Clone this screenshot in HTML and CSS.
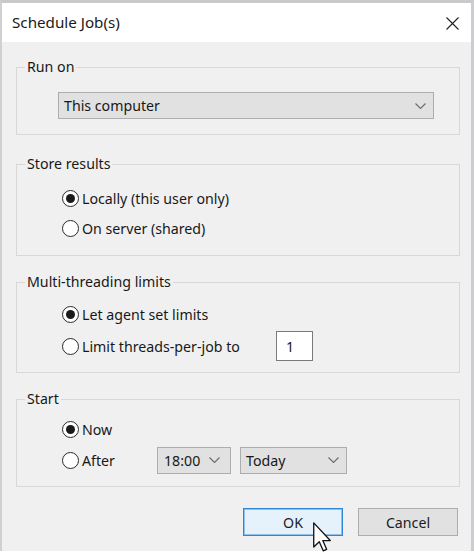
FILE: index.html
```html
<!DOCTYPE html>
<html lang="en">
<head>
<meta charset="utf-8">
<title>Schedule Job(s)</title>
<link rel="stylesheet" href="styles.css">
</head>
<body>
<div class="window">
  <div class="titlebar">
    <span class="title">Schedule Job(s)</span>
    <svg class="close" width="13" height="13" viewBox="0 0 13 13"><path d="M0.5 0.5 L12.5 12.5 M12.5 0.5 L0.5 12.5" stroke="#1f1f1f" stroke-width="1.1" fill="none"/></svg>
  </div>
  <div class="content">
    <fieldset class="group g-runon">
      <legend>Run on</legend>
      <div class="combo combo-wide">
        <span>This computer</span>
        <svg width="11" height="6" viewBox="0 0 11 6"><path d="M0.5 0.5 L5.5 5.5 L10.5 0.5" stroke="#6a6a6a" stroke-width="1.1" fill="none"/></svg>
      </div>
    </fieldset>

    <fieldset class="group g-store">
      <legend>Store results</legend>
      <div class="row"><span class="radio checked"></span><span>Locally (this user only)</span></div>
      <div class="row"><span class="radio"></span><span>On server (shared)</span></div>
    </fieldset>

    <fieldset class="group g-multi">
      <legend>Multi-threading limits</legend>
      <div class="row"><span class="radio checked"></span><span>Let agent set limits</span></div>
      <div class="row"><span class="radio"></span><span class="lbl-threads">Limit threads-per-job to</span><span class="numbox">1</span></div>
    </fieldset>

    <fieldset class="group g-start">
      <legend>Start</legend>
      <div class="row"><span class="radio checked"></span><span>Now</span></div>
      <div class="row">
        <span class="radio"></span><span class="lbl-after">After</span>
        <div class="combo combo-time">
          <span>18:00</span>
          <svg width="11" height="6" viewBox="0 0 11 6"><path d="M0.5 0.5 L5.5 5.5 L10.5 0.5" stroke="#6a6a6a" stroke-width="1.1" fill="none"/></svg>
        </div>
        <div class="combo combo-day">
          <span>Today</span>
          <svg width="11" height="6" viewBox="0 0 11 6"><path d="M0.5 0.5 L5.5 5.5 L10.5 0.5" stroke="#6a6a6a" stroke-width="1.1" fill="none"/></svg>
        </div>
      </div>
    </fieldset>

    <div class="buttons">
      <button class="btn btn-default" type="button">OK</button>
      <button class="btn" type="button">Cancel</button>
    </div>
  </div>
</div>
<svg class="cursor" width="19" height="31" viewBox="0 0 13 21"><path d="M0.5 0.5 L0.5 17 L4.3 13.4 L7 19.6 L9.3 18.6 L6.7 12.6 L11.8 12.6 Z" fill="#ffffff" stroke="#111" stroke-width="0.9" stroke-linejoin="round"/></svg>
</body>
</html>
```
FILE: styles.css
```css
html, body {
  margin: 0;
  padding: 0;
  background: #ffffff;
}
body {
  font-family: "Noto Sans", "Open Sans", sans-serif;
  font-size: 14.2px;
  color: #181818;
  width: 474px;
  height: 554px;
  overflow: hidden;
  position: relative;
}
.window {
  height: 551px;
  box-sizing: border-box;
  border-top: 3px solid #c9c9cb;
  border-left: 2px solid #d0d0d2;
  border-right: 3px solid #cdcdcf;
  background: #f0f0f0;
  display: flex;
  flex-direction: column;
}
.titlebar {
  height: 39px;
  background: #ffffff;
  display: flex;
  align-items: center;
  justify-content: space-between;
  padding: 0 12px 0 10px;
  flex: none;
}
.title {
  font-size: 15.2px;
  color: #1a1a1a;
  margin-top: -1px;
}
.close {
  display: block;
  margin-right: 0;
  margin-top: 1px;
}
.content {
  padding: 16px 11px 0 14px;
}
.group {
  margin: 0;
  padding: 0;
  border: 1px solid #d8d8d8;
  min-width: 0;
}
.group legend {
  margin-left: 8px;
  padding: 0 2px;
  line-height: 18px;
  font-size: 14.2px;
}
.g-runon {
  padding-top: 16px;
  padding-bottom: 15px;
}
.g-store {
  margin-top: 20px;
  padding-top: 10px;
  padding-bottom: 12px;
}
.g-multi {
  margin-top: 17px;
  padding-top: 8px;
  padding-bottom: 11px;
}
.g-multi .row + .row {
  margin-top: 2px;
}
.g-start {
  margin-top: 17px;
  padding-top: 6px;
  padding-bottom: 11px;
}
.g-start .row + .row {
  margin-top: 1px;
}
.row {
  display: flex;
  align-items: center;
  height: 30px;
  padding-left: 45px;
}
.radio {
  width: 17px;
  height: 17px;
  box-sizing: border-box;
  border: 1px solid #2a2a2a;
  border-radius: 50%;
  background: #ffffff;
  margin-right: 3px;
  flex: none;
  display: flex;
  align-items: center;
  justify-content: center;
}
.radio.checked::after {
  content: "";
  width: 9px;
  height: 9px;
  border-radius: 50%;
  background: #1a1a1a;
}
.lbl-threads {
  width: 194px;
}
.lbl-after {
  width: 75px;
}
.numbox {
  width: 37px;
  height: 30px;
  box-sizing: border-box;
  border: 1px solid #7a7a7a;
  background: #ffffff;
  padding-left: 9px;
  display: flex;
  align-items: center;
}
.combo {
  height: 27px;
  box-sizing: border-box;
  border: 1px solid #adadad;
  background: #e1e1e1;
  display: flex;
  align-items: center;
  justify-content: space-between;
  padding: 0 7px 0 5px;
}
.combo svg {
  display: block;
}
.combo-wide {
  width: 376px;
  margin-left: 41px;
}
.combo-time {
  width: 74px;
  padding-left: 6px;
  padding-right: 10px;
}
.combo-day {
  width: 107px;
  margin-left: 9px;
  padding-right: 7px;
}
.buttons {
  display: flex;
  justify-content: flex-end;
  gap: 15px;
  margin-top: 21px;
  padding-right: 2px;
}
.btn {
  width: 100px;
  height: 28px;
  box-sizing: border-box;
  border: 1px solid #adadad;
  background: #e1e1e1;
  font-family: inherit;
  font-size: 14.2px;
  color: #1c1c1c;
  padding: 0;
  margin: 0;
}
.btn-default {
  border-color: #2f86d6;
  background: #e5f1fb;
  box-shadow: inset 0 0 0 1px #8fc1ec;
}
.cursor {
  position: absolute;
  left: 313px;
  top: 522px;
}
```
